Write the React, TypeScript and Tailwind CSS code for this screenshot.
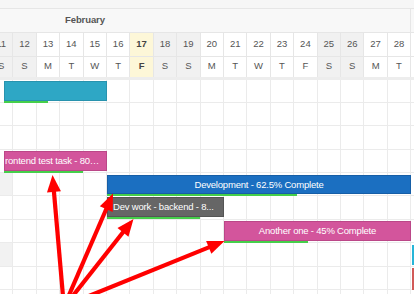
import React from 'react'

const days: [string, string, string][] = [
  ['11', 'S', 'weekend'],
  ['12', 'S', 'weekend'],
  ['13', 'M', ''],
  ['14', 'T', ''],
  ['15', 'W', ''],
  ['16', 'T', ''],
  ['17', 'F', 'today'],
  ['18', 'S', 'weekend'],
  ['19', 'S', 'weekend'],
  ['20', 'M', ''],
  ['21', 'T', ''],
  ['22', 'W', ''],
  ['23', 'T', ''],
  ['24', 'F', ''],
  ['25', 'S', 'weekend'],
  ['26', 'S', 'weekend'],
  ['27', 'M', ''],
  ['28', 'T', ''],
  ['1', 'W', ''],
]

const bars = [
  { x: 4, w: 103, y: 81, h: 19.5, bg: '#2ea7c5', edge: '#2893ae', done: 44, text: '', align: 'center' },
  { x: 4, w: 103, y: 151, h: 19.5, bg: '#d3559c', edge: '#bb4788', done: 79, text: 'rontend test task - 80…', align: 'left' },
  { x: 107, w: 304, y: 175, h: 18.5, bg: '#1b6fc1', edge: '#165ea6', done: 190, text: 'Development - 62.5% Complete', align: 'center' },
  { x: 107, w: 116.5, y: 197, h: 19.5, bg: '#666666', edge: '#555555', done: 93, text: 'Dev work - backend - 8...', align: 'pad' },
  { x: 224, w: 187, y: 221, h: 19.5, bg: '#d3559c', edge: '#bb4788', done: 84, text: 'Another one - 45% Complete', align: 'center' },
  { x: 412, w: 4, y: 245, h: 20, bg: '#26b5d8', edge: '#26b5d8', done: 0, text: '', align: 'center' },
  { x: 412, w: 4, y: 268, h: 22, bg: '#d15a58', edge: '#d15a58', done: 0, text: '', align: 'center' },
]

// red callout arrows: origin below the frame, tip on a bar
const arrows = [
  { o: [63.5, 302], t: [52.5, 175] },
  { o: [66, 302], t: [113, 193.5] },
  { o: [68, 302], t: [133.5, 219] },
  { o: [74, 302], t: [224.5, 241] },
]

function Arrow({ o, t }: { o: number[]; t: number[] }) {
  const dx = t[0] - o[0]
  const dy = t[1] - o[1]
  const len = Math.hypot(dx, dy)
  const ux = dx / len
  const uy = dy / len
  const bx = t[0] - 17 * ux
  const by = t[1] - 17 * uy
  const nx = -uy
  const ny = ux
  const hw = 7
  const pts = `${t[0]},${t[1]} ${bx + hw * nx},${by + hw * ny} ${bx - hw * nx},${by - hw * ny}`
  return (
    <g>
      <line x1={o[0]} y1={o[1]} x2={bx + 2 * ux} y2={by + 2 * uy} stroke="#ff0000" strokeWidth={4.2} />
      <polygon points={pts} fill="#ff0000" />
    </g>
  )
}

const cellTone = (k: string) =>
  k === 'weekend' ? 'bg-[#f1f1f1]' : k === 'today' ? 'bg-[#fdf7d8] font-bold text-[#444]' : 'bg-white'

export default function App() {
  return (
    <div className="relative w-[414px] h-[294px] overflow-hidden bg-white font-['Liberation_Sans',Arial,sans-serif] text-[#555]">
      <div className="h-[9px] bg-[#f6f6f6] border-b border-[#e6e6e6]" />
      <div className="h-[24px] flex bg-[#f8f8f8] border-b border-[#e6e6e6]">
        <div className="w-[411px] shrink-0 border-r border-[#e6e6e6] pl-[65px] flex items-center text-[9.5px] font-bold tracking-[-0.1px] text-[#555]">
          February
        </div>
        <div className="flex-1" />
      </div>
      <div className="flex ml-[-10.1px] h-[23.5px] border-b border-[#e6e6e6]">
        {days.map(([d, , k]) => (
          <div
            key={d}
            className={
              'w-[23.42px] shrink-0 border-r border-[#e6e6e6] flex items-center justify-center text-[9.5px] ' +
              cellTone(k)
            }
          >
            {d}
          </div>
        ))}
      </div>
      <div className="flex ml-[-10.1px] h-[23px] border-b-[3px] border-[#ededed]">
        {days.map(([d, w, k]) => (
          <div
            key={d}
            className={
              'w-[23.42px] shrink-0 border-r border-[#e6e6e6] flex items-center justify-center text-[9.5px] ' +
              cellTone(k)
            }
          >
            {w}
          </div>
        ))}
      </div>
      <div className="flex flex-col">
        {Array.from({ length: 10 }).map((_, r) => (
          <div key={r} className="flex ml-[-10.1px] h-[23.4px] shrink-0 border-b border-[#ebebeb]">
            {days.map(([d], c) => (
              <div
                key={d}
                className={
                  'w-[23.42px] shrink-0 border-r border-[#ebebeb] ' +
                  (c === 0 && (r === 4 || r === 7) ? 'bg-[#f2f2f2]' : '')
                }
              />
            ))}
          </div>
        ))}
      </div>

      {bars.map((b, i) => (
        <div key={i}>
          <div
            className="absolute overflow-hidden border flex items-center text-[9.5px] tracking-[-0.2px] text-white whitespace-nowrap leading-none"
            style={{
              left: b.x,
              top: b.y,
              width: b.w,
              height: b.h,
              background: b.bg,
              borderColor: b.edge,
              justifyContent: b.align === 'center' ? 'center' : 'flex-start',
              paddingLeft: b.align === 'pad' ? 5 : 0,
            }}
          >
            {b.text}
          </div>
          {b.done > 0 && (
            <div
              className="absolute h-[2px] bg-[#45cf4a]"
              style={{ left: b.x, top: b.y + b.h, width: b.done }}
            />
          )}
        </div>
      ))}

      <svg className="absolute left-0 top-0" width={414} height={294} viewBox="0 0 414 294">
        {arrows.map((a, i) => (
          <Arrow key={i} o={a.o} t={a.t} />
        ))}
      </svg>
    </div>
  )
}
